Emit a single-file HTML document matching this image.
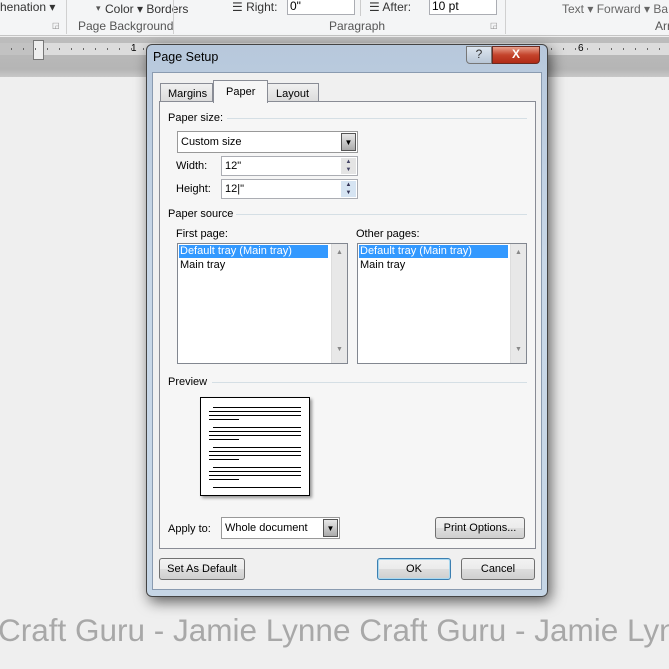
<!DOCTYPE html><html><head><style>
*{margin:0;padding:0;box-sizing:border-box}
body{width:669px;height:669px;overflow:hidden;background:#efefef;font-family:"Liberation Sans",sans-serif;font-size:11px;color:#000;position:relative}
.a{position:absolute}
.lbl{font-size:11px}
.field{background:#fff;border:1px solid #abadb3}
.btn{border:1px solid #707070;border-radius:3px;background:linear-gradient(#f2f2f2,#ebebeb 50%,#dddddd 51%,#cfcfcf);text-align:center;font-size:11px}
.sep{border-top:1px solid #d5dfe5;height:0}
.sb{background:#e8e8e8;border-left:1px solid #ddd}
</style></head><body>
<!-- ribbon -->
<div class="a" style="left:0;top:0;width:669px;height:36px;background:#f4f5f6;border-bottom:1px solid #c5c5c5"></div>
<div class="a" style="left:0;top:0;font-size:12px;color:#333">henation ▾</div>
<div class="a" style="left:66px;top:0;width:1px;height:34px;background:#d0d0d0"></div>
<div class="a" style="left:96px;top:3px;font-size:9px;color:#555">▾</div>
<div class="a" style="left:105px;top:2px;font-size:12px;color:#333">Color ▾ Borders</div>
<div class="a" style="left:78px;top:19px;font-size:12px;color:#555">Page Background</div>
<div class="a" style="left:52px;top:21px;font-size:8px;color:#888">◲</div>
<div class="a" style="left:173px;top:0;width:1px;height:34px;background:#d0d0d0"></div>
<div class="a" style="left:232px;top:0;font-size:12px;color:#333">☰ Right:</div>
<div class="a field" style="left:287px;top:-2px;width:68px;height:17px;font-size:12px;padding-left:2px">0"</div>
<div class="a" style="left:360px;top:0;width:1px;height:16px;background:#ccc"></div>
<div class="a" style="left:369px;top:0;font-size:12px;color:#333">☰ After:</div>
<div class="a field" style="left:429px;top:-2px;width:68px;height:17px;font-size:12px;padding-left:2px">10 pt</div>
<div class="a" style="left:329px;top:19px;font-size:12px;color:#555">Paragraph</div>
<div class="a" style="left:490px;top:21px;font-size:8px;color:#888">◲</div>
<div class="a" style="left:505px;top:0;width:1px;height:34px;background:#d0d0d0"></div>
<div class="a" style="left:562px;top:2px;width:107px;overflow:hidden;white-space:nowrap;font-size:12px;color:#666">Text ▾ Forward ▾ Ba</div>
<div class="a" style="left:655px;top:19px;width:14px;overflow:hidden;font-size:12px;color:#555">Arr</div>
<!-- ruler -->
<div class="a" style="left:0;top:37px;width:669px;height:40px;background:linear-gradient(#bdbdbd,#b5b5b5 80%,#c8c8c8)"></div>
<div class="a" style="left:0;top:43px;width:669px;height:12px;background:#dcdcdc"></div>
<div class="a" style="left:0;top:43px;width:38px;height:12px;background:#c2c2c2"></div>
<div class="a" style="left:33px;top:40px;width:11px;height:20px;border:1px solid #777;background:#eee"></div>
<div class="a" style="left:131px;top:43px;font-size:10px">1</div>
<div class="a" style="left:578px;top:43px;font-size:10px">6</div>
<div class="a" style="left:0;top:48px;width:669px;height:2px;background:repeating-linear-gradient(90deg,transparent 0 11px,#666 11px 12px)"></div>
<!-- dialog -->
<div class="a" style="left:146px;top:44px;width:402px;height:553px;border-radius:6px;border:1px solid #444;background:linear-gradient(#b7c8dc,#c9d8e8 40%,#c6d6e6);box-shadow:3px 5px 14px rgba(0,0,0,.6)"></div>
<div class="a" style="left:153px;top:50px;font-size:12.5px">Page Setup</div>
<div class="a" style="left:466px;top:46px;width:26px;height:18px;border:1px solid #777;border-radius:0 0 0 4px;background:linear-gradient(#dde6f0,#b8c6d6);text-align:center;font-size:12px;color:#333">?</div>
<div class="a" style="left:492px;top:46px;width:48px;height:18px;border:1px solid #6b2a20;border-radius:0 0 4px 0;background:linear-gradient(#e8a08c,#c4432b 50%,#b02a16);text-align:center;color:#fff;font-weight:bold;font-size:12px">X</div>
<div class="a" style="left:152px;top:72px;width:390px;height:518px;background:#f0f0f0;border:1px solid #8a9bb0"></div>
<!-- tabs -->
<div class="a" style="left:159px;top:101px;width:377px;height:448px;border:1px solid #898c95;background:#f6f6f6"></div>
<div class="a" style="left:160px;top:83px;width:53px;height:19px;border:1px solid #898c95;background:linear-gradient(#f0f0f0,#dcdcdc);font-size:11px;padding:4px 0 0 7px">Margins</div>
<div class="a" style="left:266px;top:83px;width:53px;height:19px;border:1px solid #898c95;background:linear-gradient(#f0f0f0,#dcdcdc);font-size:11px;padding:4px 0 0 9px">Layout</div>
<div class="a" style="left:213px;top:80px;width:55px;height:23px;border:1px solid #898c95;border-bottom:none;background:#f6f6f6;font-size:11px;padding:5px 0 0 12px">Paper</div>
<!-- paper size -->
<div class="a lbl" style="left:168px;top:112px">Paper size:</div>
<div class="a sep" style="left:227px;top:118px;width:300px"></div>
<div class="a field" style="left:177px;top:131px;width:181px;height:22px;border-color:#999;padding:4px 0 0 3px">Custom size</div>
<div class="a" style="left:341px;top:133px;width:15px;height:18px;border:1px solid #555;background:linear-gradient(#e8e8e8,#aaa);font-size:8px;text-align:center;line-height:17px">▼</div>
<div class="a lbl" style="left:176px;top:160px">Width:</div>
<div class="a field" style="left:221px;top:156px;width:137px;height:20px;padding:3px 0 0 3px">12"</div>
<div class="a" style="left:341px;top:158px;width:15px;height:16px;background:#e4e4e4;font-size:6px;text-align:center;line-height:8px;color:#446">▲<br>▼</div>
<div class="a lbl" style="left:176px;top:183px">Height:</div>
<div class="a field" style="left:221px;top:179px;width:137px;height:20px;padding:3px 0 0 3px">12|"</div>
<div class="a" style="left:341px;top:181px;width:15px;height:16px;background:#d6e4f2;font-size:6px;text-align:center;line-height:8px;color:#335">▲<br>▼</div>
<!-- paper source -->
<div class="a lbl" style="left:168px;top:208px">Paper source</div>
<div class="a sep" style="left:236px;top:214px;width:291px"></div>
<div class="a lbl" style="left:176px;top:228px">First page:</div>
<div class="a lbl" style="left:356px;top:228px">Other pages:</div>
<div class="a" style="left:177px;top:243px;width:171px;height:121px;border:1px solid #828790;background:#fff"></div>
<div class="a" style="left:179px;top:245px;width:149px;height:13px;background:#3399ff;color:#fff;padding-left:1px;line-height:13px">Default tray (Main tray)</div>
<div class="a" style="left:180px;top:259px">Main tray</div>
<div class="a sb" style="left:331px;top:244px;width:16px;height:119px;font-size:7px;color:#888;text-align:center;padding-top:5px">▲<div style="margin-top:90px">▼</div></div>
<div class="a" style="left:357px;top:243px;width:170px;height:121px;border:1px solid #828790;background:#fff"></div>
<div class="a" style="left:359px;top:245px;width:149px;height:13px;background:#3399ff;color:#fff;padding-left:1px;line-height:13px">Default tray (Main tray)</div>
<div class="a" style="left:360px;top:259px">Main tray</div>
<div class="a sb" style="left:510px;top:244px;width:16px;height:119px;font-size:7px;color:#888;text-align:center;padding-top:5px">▲<div style="margin-top:90px">▼</div></div>
<!-- preview -->
<div class="a lbl" style="left:168px;top:376px">Preview</div>
<div class="a sep" style="left:212px;top:382px;width:315px"></div>
<div class="a" style="left:200px;top:397px;width:110px;height:99px;border:1px solid #000;background:#fff;box-shadow:2px 2px 3px rgba(0,0,0,.4)"></div>
<svg class="a" style="left:200px;top:397px" width="110" height="99" stroke="#000" stroke-width="1">
<g id="g"><line x1="13" y1="10.5" x2="101" y2="10.5"/><line x1="9" y1="14.5" x2="101" y2="14.5"/><line x1="9" y1="18.5" x2="101" y2="18.5"/><line x1="9" y1="22.5" x2="39" y2="22.5"/></g>
<use href="#g" y="20"/><use href="#g" y="40"/><use href="#g" y="60"/>
<line x1="13" y1="90.5" x2="101" y2="90.5"/></svg>
<!-- apply -->
<div class="a lbl" style="left:168px;top:523px">Apply to:</div>
<div class="a field" style="left:221px;top:517px;width:119px;height:22px;border-color:#999;padding:4px 0 0 3px">Whole document</div>
<div class="a" style="left:323px;top:519px;width:15px;height:18px;border:1px solid #555;background:linear-gradient(#e8e8e8,#aaa);font-size:8px;text-align:center;line-height:17px">▼</div>
<div class="a btn" style="left:435px;top:517px;width:90px;height:22px;line-height:20px">Print Options...</div>
<div class="a btn" style="left:159px;top:558px;width:86px;height:22px;line-height:20px">Set As Default</div>
<div class="a btn" style="left:377px;top:558px;width:74px;height:22px;line-height:20px;border-color:#3c7fb1;box-shadow:inset 0 0 0 1px #a8d8f0">OK</div>
<div class="a btn" style="left:461px;top:558px;width:74px;height:22px;line-height:20px">Cancel</div>
<!-- watermark -->
<div class="a" style="left:0;top:605px;width:669px;height:50px;overflow:hidden">
<div style="position:absolute;left:-2px;top:7px;font-size:31.5px;color:#a8a8a8;white-space:nowrap">Craft Guru - Jamie Lynne Craft Guru - Jamie Lynne</div>
</div>
</body></html>
